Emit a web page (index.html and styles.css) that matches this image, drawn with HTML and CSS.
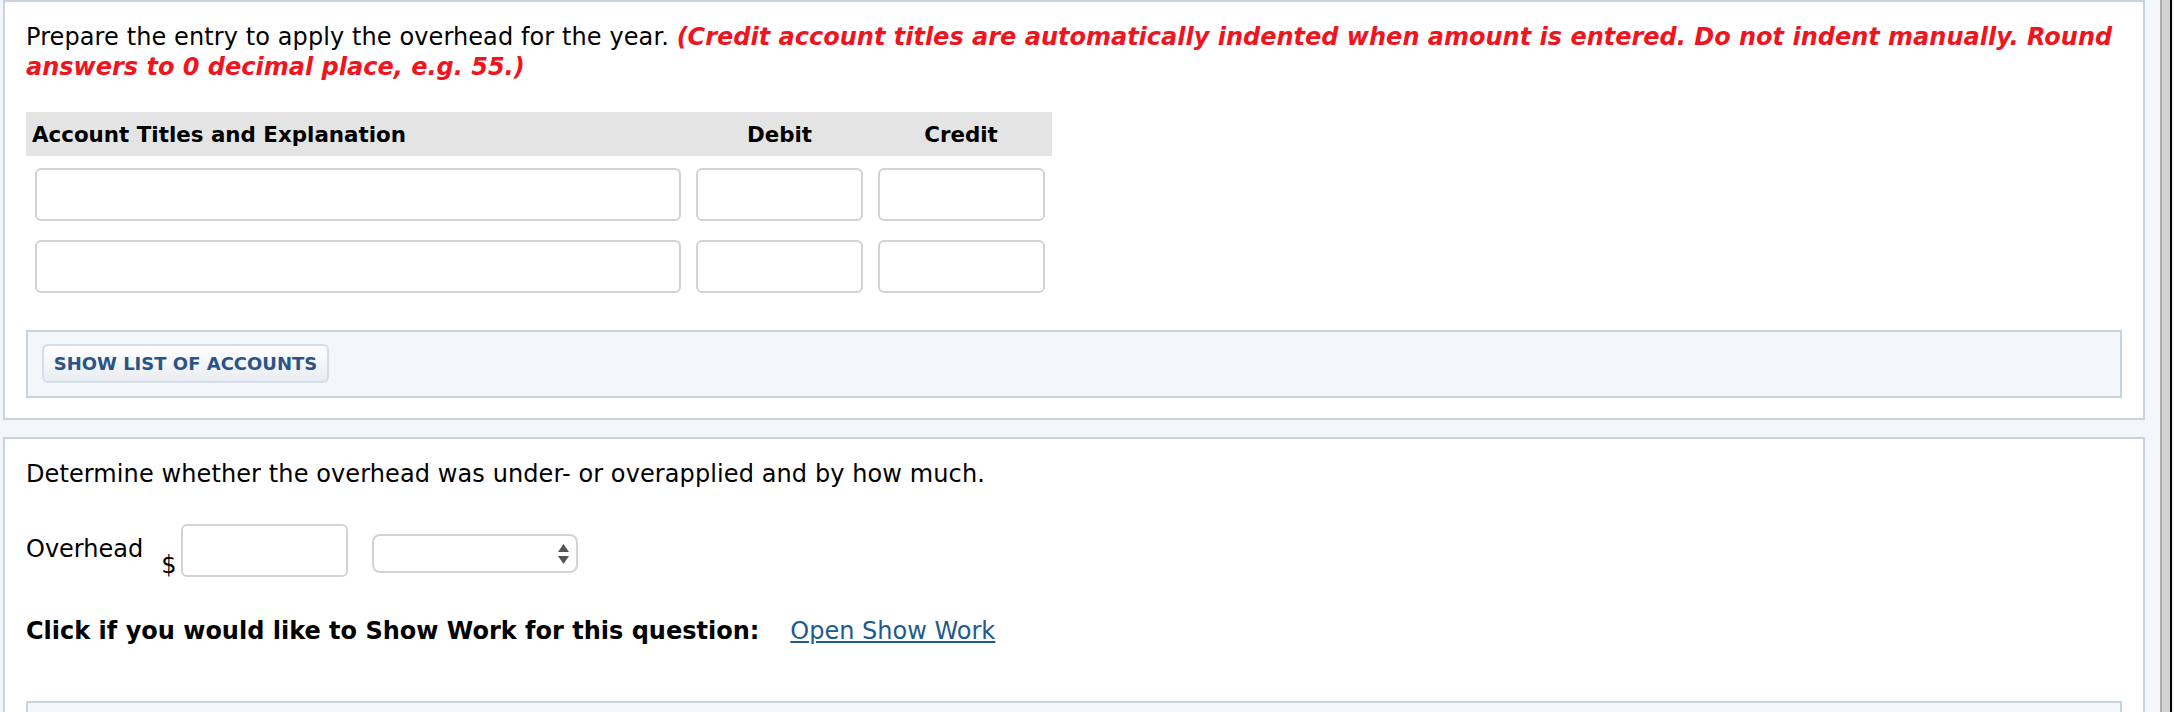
FILE: index.html
```html
<!DOCTYPE html>
<html lang="en">
<head>
<meta charset="utf-8">
<title>Overhead entry</title>
<link rel="stylesheet" href="styles.css">
</head>
<body>
<div class="window">
  <main class="content">
    <section class="card">
      <p class="prompt">Prepare the entry to apply the overhead for the year. <em class="note">(Credit account titles are automatically indented when amount is entered. Do not indent manually. Round answers to 0 decimal place, e.g. 55.)</em></p>
      <div class="journal">
        <div class="jhead">
          <div class="c-acct">Account Titles and Explanation</div>
          <div class="c-num">Debit</div>
          <div class="c-num">Credit</div>
        </div>
        <div class="jrow">
          <input class="field f-acct" type="text">
          <input class="field f-num" type="text">
          <input class="field f-num" type="text">
        </div>
        <div class="jrow">
          <input class="field f-acct" type="text">
          <input class="field f-num" type="text">
          <input class="field f-num" type="text">
        </div>
      </div>
      <div class="tools">
        <button class="btn" type="button">SHOW LIST OF ACCOUNTS</button>
      </div>
    </section>
    <section class="card">
      <p class="prompt">Determine whether the overhead was under- or overapplied and by how much.</p>
      <div class="answer-row">
        <span class="lbl">Overhead</span>
        <span class="dollar">$</span>
        <input class="field amount" type="text">
        <div class="select">
          <svg class="arrows" width="11" height="20" viewBox="0 0 11 20"><path d="M0 8 L5.5 0 L11 8 Z M0 12 L11 12 L5.5 20 Z" fill="#555"/></svg>
        </div>
      </div>
      <p class="showwork"><b>Click if you would like to Show Work for this question:</b><a class="link" href="#">Open Show Work</a></p>
      <div class="tools tools-bottom"></div>
    </section>
  </main>
  <div class="scrollbar"></div>
</div>
</body>
</html>
```
FILE: styles.css
```css
html, body {
  margin: 0;
  height: 712px;
  overflow: hidden;
}
body {
  background: #f4f7fa;
  font-family: "DejaVu Sans", Verdana, sans-serif;
  color: #000;
}
.window {
  display: flex;
  height: 712px;
}
.content {
  flex: 1;
  padding: 0 15px 0 3px;
  min-width: 0;
}
.scrollbar {
  width: 12px;
  box-sizing: border-box;
  border-left: 2px solid #acacac;
  border-right: 2px solid #000;
  background: #d3d3d3;
  margin-right: 2px;
}
.card {
  background: #fff;
  border: 2px solid #c9d3df;
  padding: 20px 21px 20px;
}
.card + .card {
  margin-top: 17px;
}
.prompt {
  margin: 0;
  font-size: 24px;
  line-height: 30px;
  letter-spacing: 0.1px;
}
.note {
  color: #f0141e;
  font-weight: bold;
  font-style: italic;
  letter-spacing: 0;
}
.journal {
  margin-top: 30px;
  width: 1026px;
}
.jhead, .jrow {
  display: grid;
  grid-template-columns: 663px 181px 182px;
}
.jhead {
  background: #e4e4e4;
  height: 44px;
  align-items: center;
  font-weight: bold;
  font-size: 21.4px;
}
.jhead .c-acct {
  padding-left: 6px;
}
.jhead .c-num {
  text-align: center;
}
.jrow {
  padding: 12px 0 7px;
}
.field {
  box-sizing: border-box;
  height: 53px;
  border: 2px solid #d3d3d3;
  border-radius: 6px;
  background: #fff;
  margin: 0;
  padding: 0 8px;
  font: 24px "DejaVu Sans", Verdana, sans-serif;
  outline: none;
}
.f-acct {
  width: 646px;
  margin-left: 9px;
}
.f-num {
  width: 167px;
  justify-self: center;
}
.tools {
  margin-top: 30px;
  border: 2px solid #c9d3df;
  background: #f4f7fa;
  padding: 12px 14px 13px;
}
.btn {
  display: block;
  height: 39px;
  width: 287px;
  padding: 0;
  font: bold 18px "DejaVu Sans", Verdana, sans-serif;
  color: #2a5488;
  border: 2px solid #d5dde8;
  border-radius: 6px;
  background: linear-gradient(#ffffff, #e8ecf1);
}
.answer-row {
  display: flex;
  align-items: flex-start;
  margin-top: 35px;
  font-size: 24px;
  line-height: 30px;
}
.lbl {
  margin-top: 10px;
}
.dollar {
  margin-top: 26px;
  margin-left: 18px;
}
.amount {
  width: 167px;
  margin-left: 4px;
}
.select {
  box-sizing: border-box;
  width: 206px;
  height: 39px;
  margin: 10px 0 0 24px;
  border: 2px solid #d3d3d3;
  border-radius: 8px;
  background: #fff;
  display: flex;
  align-items: center;
  justify-content: flex-end;
  padding-right: 7px;
}
.arrows {
  display: block;
}
.showwork {
  margin: 36px 0 0;
  font-size: 24px;
  line-height: 30px;
}
.link {
  margin-left: 31px;
  color: #1d5a8e;
  text-decoration: underline;
}
.tools-bottom {
  margin-top: 55px;
  height: 80px;
  padding: 0;
}
```
